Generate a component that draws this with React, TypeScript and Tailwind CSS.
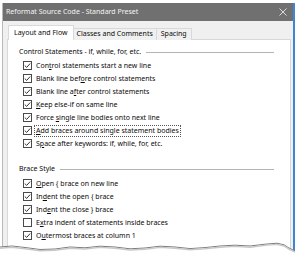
import React from "react";

const F = { fontFamily: '"Noto Sans", "Open Sans", sans-serif' };

function U({ t, i }: { t: string; i: number }) {
  return (
    <>
      {t.slice(0, i)}
      <span className="underline underline-offset-[1px] decoration-[0.6px]">{t[i]}</span>
      {t.slice(i + 1)}
    </>
  );
}

function Box({ checked }: { checked: boolean }) {
  return (
    <div className="w-[9px] h-[9px] border border-[#4a4a4a] bg-white flex items-center justify-center shrink-0">
      {checked && (
        <svg width="7" height="7" viewBox="0 0 7 7">
          <path d="M0.8 3.6 L2.7 5.4 L6.2 1.5" fill="none" stroke="#1e1e1e" strokeWidth="0.9" />
        </svg>
      )}
    </div>
  );
}

function Row({ t, i, checked = true, focus = false }: { t: string; i: number; checked?: boolean; focus?: boolean }) {
  return (
    <div className="flex items-center h-[13px] pl-[4px] gap-[2px]">
      <Box checked={checked} />
      <span
        className={
          focus
            ? "border border-dotted border-[#555555] px-[1px] leading-[10px]"
            : "px-[2px] leading-[10px]"
        }
      >
        <U t={t} i={i} />
      </span>
    </div>
  );
}

function Header({ t }: { t: string }) {
  return (
    <div className="flex items-center h-[13px] mr-[16px]">
      <span>{t}</span>
      <div className="flex-1 h-px bg-[#b4b4b4] ml-[5px]" />
    </div>
  );
}

export default function App() {
  return (
    <div className="relative w-[300px] h-[254px] bg-white overflow-hidden text-[7px] text-[#0a0a0a]" style={F}>
      <div className="mt-[3px] ml-[2px] w-[293px] h-[251px] flex flex-col border-l border-[#b9b9b9] border-r-[2px] border-r-[#3d86d6]">
        <div className="h-[18px] bg-[#707070] flex items-center pl-[3px] pr-[6px] text-[#f4f4f4] shrink-0">
          <span className="flex-1">Reformat Source Code - Standard Preset</span>
          <svg width="8" height="8" viewBox="0 0 8 8">
            <path d="M0.5 0.5 L7.5 7.5 M7.5 0.5 L0.5 7.5" stroke="#e8e8e8" strokeWidth="0.9" />
          </svg>
        </div>
        <div className="flex-1 bg-[#f0f0f0] pt-[4px] pl-[4px] pr-[2px] flex flex-col">
          <div className="flex items-end pl-[1px] relative z-10 -mb-px">
            <div className="h-[15px] px-[5px] bg-white border border-b-0 border-[#d9d9d9] flex items-center">
              Layout and Flow
            </div>
            <div className="h-[12px] px-[3px] bg-[#f0f0f0] border border-b-0 border-l-0 border-[#d9d9d9] flex items-center">
              Classes and Comments
            </div>
            <div className="h-[12px] px-[4px] bg-[#f0f0f0] border border-b-0 border-l-0 border-[#d9d9d9] flex items-center">
              Spacing
            </div>
          </div>
          <div className="flex-1 bg-white border border-[#d9d9d9] pt-[6px] pl-[11px]">
            <Header t="Control Statements - if, while, for, etc." />
            <Row t="Control statements start a new line" i={3} />
            <Row t="Blank line before control statements" i={14} />
            <Row t="Blank line after control statements" i={12} />
            <Row t="Keep else-if on same line" i={0} />
            <Row t="Force single line bodies onto next line" i={6} />
            <Row t="Add braces around single statement bodies" i={0} focus />
            <Row t="Space after keywords: if, while, for, etc." i={1} />
            <div className="h-[13px]" />
            <Header t="Brace Style" />
            <div className="mt-[1px]">
              <Row t="Open { brace on new line" i={0} />
              <Row t="Indent the open { brace" i={2} />
              <Row t="Indent the close } brace" i={3} />
              <Row t="Extra indent of statements inside braces" i={1} checked={false} />
              <Row t="Outermost braces at column 1" i={1} />
            </div>
          </div>
        </div>
      </div>
      <svg className="absolute left-0 top-[236px]" width="300" height="18" viewBox="0 236 300 18">
        <path
          d="M0 247 L12 246 L25 247.5 L40 249.5 L55 249 L70 247 L85 247.8 L100 246.2 L115 247 L130 248.8 L145 248 L160 246.2 L175 247 L190 248.6 L205 247.6 L220 246 L235 245.2 L250 246 L265 244.2 L277 243.2 L284 244.8 L289 248 L295 251 L300 252 L300 254 L0 254 Z"
          fill="#ffffff"
        />
        <path
          d="M0 247 L12 246 L25 247.5 L40 249.5 L55 249 L70 247 L85 247.8 L100 246.2 L115 247 L130 248.8 L145 248 L160 246.2 L175 247 L190 248.6 L205 247.6 L220 246 L235 245.2 L250 246 L265 244.2 L277 243.2 L284 244.8 L289 248 L295 251"
          fill="none"
          stroke="#7c7c7c"
          strokeWidth="1"
        />
        <path
          d="M0 248.2 L12 247.2 L25 248.7 L40 250.7 L55 250.2 L70 248.2 L85 249 L100 247.4 L115 248.2 L130 250 L145 249.2 L160 247.4 L175 248.2 L190 249.8 L205 248.8 L220 247.2 L235 246.4 L250 247.2 L265 245.4 L277 244.4 L284 246 L289 249.2 L295 252.2"
          fill="none"
          stroke="#c8c8c8"
          strokeWidth="1.4"
        />
      </svg>
    </div>
  );
}
